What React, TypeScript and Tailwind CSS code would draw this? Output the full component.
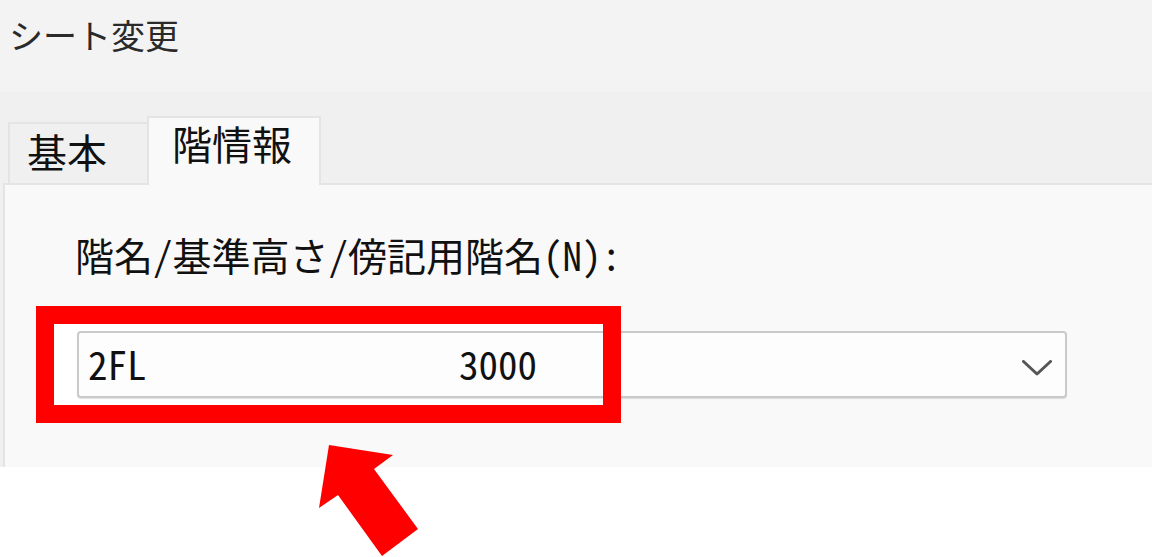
import React from "react";

export default function App() {
  return (
    <div className="relative w-[1152px] h-[557px] overflow-hidden bg-white font-['Noto_Sans_Mono_CJK_JP','Noto_Sans_CJK_JP',sans-serif] text-[#111]">
      {/* title bar */}
      <div className="h-[92px] bg-[#f3f3f3] pl-[9px] pt-[13px] font-['Noto_Sans_CJK_JP',sans-serif] text-[34px] leading-[44px] text-[#2a2a2a]">
        シート変更
      </div>

      {/* dialog body */}
      <div className="h-[375px] bg-[#f0f0f0] flex flex-col">
        {/* tab strip */}
        <div className="h-[91px] flex items-end pl-[8px]">
          <div className="h-[61px] w-[139px] border-t-2 border-l-2 border-[#e4e4e4] bg-[#f0f0f0] pl-[17px] pt-[7px] text-[40px] leading-[40px]">
            基本
          </div>
          <div className="relative z-10 -mb-[2px] h-[69px] w-[174px] border-t-2 border-l-2 border-r-2 border-[#e4e4e4] bg-[#f9f9f9] pl-[23px] pt-[5px] text-[40px] leading-[40px]">
            階情報
          </div>
          <div className="flex-1" />
        </div>

        {/* panel */}
        <div className="ml-[3px] flex-1 bg-[#f9f9f9] border-t-2 border-l-2 border-[#e4e4e4] flex flex-col">
          <div className="pl-[70px] pt-[47px] text-[39px] leading-[44px] whitespace-nowrap">
            階名/基準高さ/傍記用階名(N):
          </div>
          <div className="relative z-10 ml-[72px] mt-[55px] h-[67px] w-[990px] rounded-[4px] border-2 border-[#cacaca] bg-[#fdfdfd] shadow-[0_1px_1px_rgba(0,0,0,0.12)] flex items-center pl-[9px] pb-[3px] text-[39px] leading-[44px]">
            <span className="inline-block w-[371px]">2FL</span>
            <span>3000</span>
            <svg
              className="absolute right-[13px] top-[27px]"
              width="30"
              height="16"
              viewBox="0 0 30 16"
            >
              <polyline
                points="1.5,1.5 15,14 28.5,1.5"
                fill="none"
                stroke="#555555"
                strokeWidth="3"
                strokeLinecap="round"
                strokeLinejoin="round"
              />
            </svg>
          </div>
        </div>
      </div>

      {/* annotation: white fill behind the combobox */}
      <div className="absolute left-[54px] top-[324px] w-[549px] h-[81px] bg-white" />
      {/* annotation: red frame over the combobox */}
      <div className="absolute z-20 left-[36px] top-[306px] w-[585px] h-[117px] border-[18px] border-[#ff0000]" />

      {/* annotation arrow */}
      <svg
        className="absolute left-0 top-0 z-20"
        width="1152"
        height="557"
        viewBox="0 0 1152 557"
      >
        <polygon
          points="329,445 393,455 374,469 418,529 382,556 338,495 319,508"
          fill="#ff0000"
        />
      </svg>
    </div>
  );
}
